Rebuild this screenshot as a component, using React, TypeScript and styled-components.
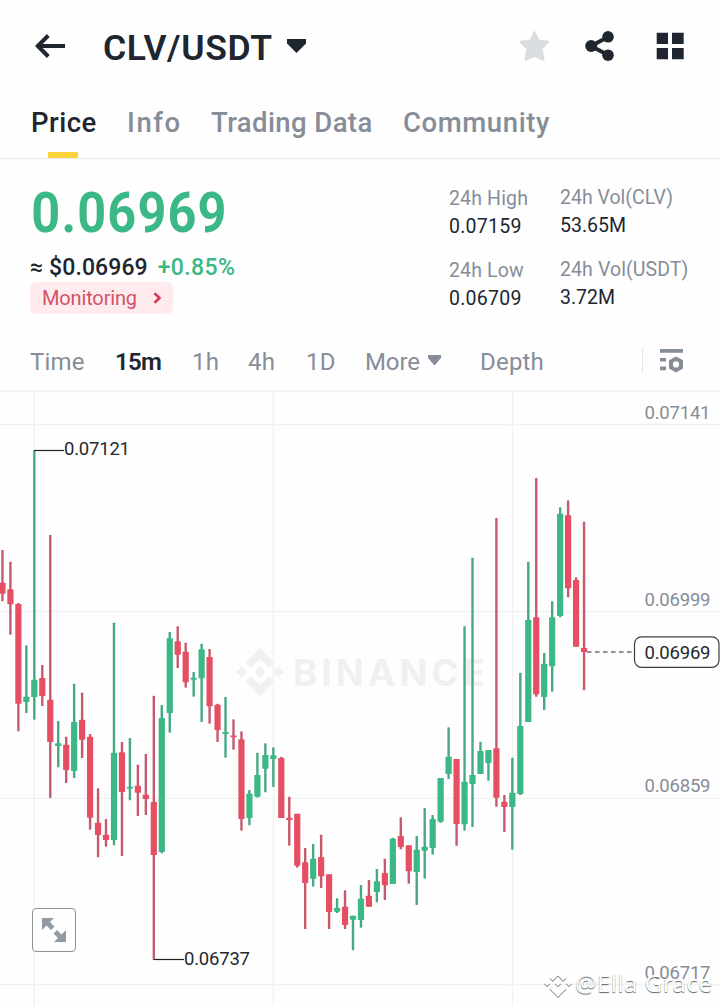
import React from "react";
import styled, { createGlobalStyle } from "styled-components";

const GREEN = "#3bb885";
const RED = "#e64f63";
const INK = "#202630";
const MUTED = "#868d98";

const Global = createGlobalStyle`
  * { box-sizing: border-box; }
  body { margin: 0; background: #fff; font-family: Roboto, "Liberation Sans", sans-serif; overflow: hidden; }
  svg { display: block; }
`;

const Screen = styled.main`
  position: relative;
  width: 720px;
  height: 1006px;
  overflow: hidden;
  background: #fefefe;
  color: ${INK};
  white-space: nowrap;
`;

const Header = styled.header`
  display: flex;
  align-items: center;
  height: 94px;
  padding: 0 35px 2px;
`;

const Pair = styled.h1`
  margin: 4px 0 0 38px;
  width: 184px;
  font-size: 35.5px;
  line-height: 44px;
  font-weight: 600;
  letter-spacing: 0.65px;
`;

const HeaderActions = styled.div`
  display: flex;
  align-items: center;
  gap: 34px;
  margin-left: auto;
`;

const Tabs = styled.nav`
  display: flex;
  height: 65px;
  padding-left: 31px;
  border-bottom: 1px solid #e9ebec;
`;

const Tab = styled.a<{ $w: number; $ls: number; $active?: boolean }>`
  display: flex;
  flex-direction: column;
  justify-content: space-between;
  width: ${(p) => p.$w}px;
  padding-top: 11px;
  font-size: 27.5px;
  line-height: 36px;
  font-weight: 500;
  letter-spacing: ${(p) => p.$ls}px;
  color: ${(p) => (p.$active ? INK : MUTED)};
`;

const TabMark = styled.i`
  width: 30px;
  height: 6px;
  margin-left: 17px;
  background: #f8d33a;
`;

const Summary = styled.section`
  display: flex;
  height: 173px;
  padding: 24px 0 0 30px;
`;

const PriceBlock = styled.div`
  width: 419px;
`;

const BigPrice = styled.div`
  height: 60px;
  padding-left: 1.5px;
  font-size: 56px;
  line-height: 61px;
  font-weight: 700;
  letter-spacing: 1.3px;
  color: ${GREEN};
  transform: scaleX(0.9);
  transform-origin: 0 0;
`;

const Fiat = styled.div`
  display: flex;
  gap: 10px;
  margin-top: 10px;
  font-size: 23px;
  line-height: 30px;
  height: 29px;
  font-weight: 500;
  letter-spacing: 0.1px;
`;

const Change = styled.span`
  color: ${GREEN};
  letter-spacing: 0.35px;
`;

const Tag = styled.div`
  display: flex;
  align-items: center;
  justify-content: space-between;
  width: 143px;
  height: 32px;
  padding: 0 11px 0 12px;
  border-radius: 6px;
  background: #ffebee;
  color: #cf5468;
  font-size: 20px;
  letter-spacing: -0.15px;
`;

const StatColumn = styled.dl<{ $w: number; $top: number }>`
  width: ${(p) => p.$w}px;
  margin: ${(p) => p.$top}px 0 0;
`;

const StatLabel = styled.dt<{ $ls?: number }>`
  font-size: 19.5px;
  line-height: 28px;
  letter-spacing: ${(p) => p.$ls ?? 0}px;
  color: ${MUTED};
`;

const StatValue = styled.dd<{ $ls?: number }>`
  margin: 0 0 16px;
  font-size: 19.5px;
  line-height: 28px;
  letter-spacing: ${(p) => p.$ls ?? 0}px;
`;

const Intervals = styled.nav`
  display: flex;
  align-items: center;
  height: 60px;
  padding: 0 36px 0 30px;
  border-bottom: 2px solid #f2f3f4;
`;

const Interval = styled.span<{ $w: number; $ls?: number; $active?: boolean }>`
  display: flex;
  align-items: center;
  gap: 8px;
  width: ${(p) => p.$w}px;
  padding-top: 2px;
  font-size: 24px;
  line-height: 32px;
  font-weight: ${(p) => (p.$active ? 600 : 400)};
  letter-spacing: ${(p) => p.$ls ?? 0.2}px;
  color: ${(p) => (p.$active ? INK : MUTED)};
  svg { margin-bottom: 4px; }
`;

const Settings = styled.div`
  display: flex;
  align-items: center;
  height: 25px;
  margin: 0 0 1px auto;
  padding-left: 16px;
  border-left: 1px solid #e6e8ea;
`;

const ChartArea = styled.section`
  position: relative;
  height: 614px;
`;

const Expand = styled.button`
  position: absolute;
  left: 32px;
  top: 516px;
  display: grid;
  place-items: center;
  width: 44px;
  height: 44px;
  padding: 0;
  border: 1px solid #8b9499;
  border-radius: 4px;
  background: #fefefe;
`;

const Credit = styled.div`
  position: absolute;
  left: 544px;
  top: 969px;
  display: flex;
  align-items: center;
  gap: 3px;
  color: #fff;
  font-family: "Noto Sans", sans-serif;
  font-size: 24px;
  line-height: 28px;
  letter-spacing: 0.45px;
  text-shadow: 0 1px 1px rgba(50, 50, 50, 0.75);
  svg { filter: drop-shadow(0 1px 0.5px rgba(50, 50, 50, 0.7)); }
`;

type Candle = [number, number, number, number, 0 | 1];

// high, body top, body bottom, low, rising
const candles: Candle[] = [
  [550, 582.7, 593.7, 601.3, 0], [561.7, 589.3, 604.3, 634.7, 0], [603, 604, 703.7, 731.3, 0],
  [645.3, 696.7, 702, 713, 1], [450.3, 679.7, 697, 719.7, 1], [665, 678, 696, 706, 0],
  [535, 699.7, 742, 798, 0], [721, 743.2, 746, 767.3, 1], [736.7, 744.7, 770, 783, 0],
  [683.7, 722, 771, 778, 1], [692.7, 719.7, 739.7, 758, 0], [734, 736.7, 817.7, 829.7, 0],
  [788.3, 822.7, 835, 857.3, 0], [819, 834.7, 840, 846.7, 0], [622.7, 752.7, 840, 845.3, 1],
  [742, 752.3, 792, 856, 0], [738, 786.7, 788.7, 800.3, 1], [764.7, 785.7, 792.7, 816, 0],
  [754, 794.7, 799, 815, 0], [695.7, 802, 855, 960, 0], [705, 718, 852, 853.3, 1],
  [632, 638.3, 713, 732.7, 1], [626.3, 641.3, 654.7, 668, 0], [642.7, 651.7, 682.3, 687.7, 0],
  [672, 677.8, 679.7, 696.7, 1], [643.7, 649.3, 678.3, 722, 1], [649, 657, 706.3, 723.7, 0],
  [703.7, 704.7, 730, 742, 0], [697, 732, 734, 757.7, 1], [719.3, 735.5, 737.2, 749.7, 0],
  [731.3, 739.3, 819, 830.7, 0], [790, 793.7, 818, 825.3, 1], [752.7, 775, 796.7, 797.5, 1],
  [743.3, 755, 768.7, 792.3, 1], [747.3, 755.3, 759, 787, 1], [756.7, 758, 818, 818, 0],
  [796.7, 817.7, 820, 845.7, 0], [813.7, 813.7, 865.7, 867.7, 0], [848, 862.3, 883, 929, 0],
  [844, 858.7, 878.7, 886.7, 1], [834.7, 857, 876.3, 888, 0], [874.3, 874.3, 912, 929, 0],
  [898.3, 908, 911.7, 913, 1], [890.3, 906.7, 925, 929, 0], [915.7, 915.7, 919.7, 950.3, 1],
  [885, 898.7, 920, 927.7, 1], [880, 895.7, 906.7, 906.7, 0], [869, 881.3, 892, 902.3, 1],
  [858.7, 873, 885.3, 900, 0], [837.7, 838.7, 884, 884, 1], [817.3, 836, 847, 849.3, 0],
  [845.3, 845.3, 871.3, 883.7, 0], [836, 849.7, 872, 905, 1], [808, 846.7, 850.7, 878.7, 1],
  [815, 819, 848, 854.7, 1], [778, 778, 821.7, 822.7, 1], [727.3, 756.7, 774, 779, 1],
  [759, 759, 824, 845.7, 0], [626.3, 781.7, 824.3, 830.7, 1], [557.7, 775, 784, 827, 1],
  [741.7, 751, 774, 774, 1], [750, 750, 763, 780.7, 1], [518, 748.3, 797.7, 806.7, 0],
  [795, 801.7, 807, 832, 0], [757.7, 792.7, 807, 849.7, 1], [672.7, 726, 794, 795, 1],
  [561.7, 620, 722, 722, 1], [478, 617.3, 694.3, 696.7, 0], [653, 663.7, 697, 710, 1],
  [601.3, 617.3, 666.3, 691.7, 1], [507.3, 513.7, 616, 617.3, 1], [500.3, 515.3, 588.3, 597.3, 0],
  [577.3, 580, 646.7, 646.7, 0], [521.7, 648, 652, 690.3, 0],
];

const axis = [
  { y: 412, value: "0.07141" },
  { y: 599, value: "0.06999" },
  { y: 785.5, value: "0.06859" },
  { y: 972.5, value: "0.06717" },
];

const BrandMark = ({ size }: { size: number }) => (
  <svg width={size} height={size} viewBox="0 0 48 48" fill="currentColor">
    <path d="M24 0 38.5 14.5 33 20 24 11 15 20 9.5 14.5ZM24 48 9.5 33.5 15 28 24 37 33 28 38.5 33.5ZM24 18.5 29.5 24 24 29.5 18.5 24ZM5.3 18.7 10.6 24 5.3 29.3 0 24ZM42.7 18.7 48 24 42.7 29.3 37.4 24Z" />
  </svg>
);

const Chart = () => (
  <svg width="720" height="614" viewBox="0 392 720 614" fontFamily='Roboto, "Liberation Sans", sans-serif'>
    <g stroke="#f0f1f1" strokeWidth="1.3">
      {[424.5, 611.5, 798.3, 984.5].map((y) => <line key={y} x1="0" x2="720" y1={y} y2={y} />)}
      {[34.3, 273.5, 512.5].map((x) => <line key={x} x1={x} x2={x} y1="392" y2="1006" />)}
    </g>
    <g color="#eff1f1" transform="translate(236 648)"><BrandMark size={48} /></g>
    <text x="293" y="685.5" fontSize="37" fontWeight="700" fontFamily="Inter, sans-serif" fill="#eff1f1" textLength="192">BINANCE</text>
    {candles.map(([high, top, bottom, low, up], i) => {
      const x = 2.45 + i * 7.967;
      return (
        <g key={i}>
          <rect x={x - 1.2} y={high} width="2.4" height={low - high} rx="0.6" fill={up ? "#46a885" : "#c65a6d"} />
          <rect x={x - 3.1} y={top} width="6.2" height={bottom - top} rx="0.6" fill={up ? GREEN : RED} />
        </g>
      );
    })}
    <g stroke="#202428" strokeWidth="1.2">
      <line x1="34" x2="64" y1="450.5" y2="450.5" />
      <line x1="154" x2="184" y1="959.5" y2="959.5" />
      <line x1="587" x2="633" y1="652" y2="652" stroke="#666b70" strokeWidth="1.5" strokeDasharray="4.5 3.5" />
    </g>
    <g fill="#25292e" fontSize="18.5">
      <text x="64" y="455.3" textLength="66">0.07121</text>
      <text x="184" y="965" textLength="66">0.06737</text>
    </g>
    <g fill={MUTED} fontSize="18.5">
      {axis.map((a) => <text key={a.value} x="644.5" y={a.y + 6.5} textLength="66">{a.value}</text>)}
    </g>
    <rect x="634.5" y="636.8" width="84.5" height="30.5" rx="7" fill="#fefefe" stroke="#3a3f44" strokeWidth="1.2" />
    <text x="644.5" y="658.8" fontSize="18.5" fill="#25292e" textLength="66">0.06969</text>
  </svg>
);

export default function App() {
  return (
    <Screen>
      <Global />
      <Header>
        <svg width="30" height="24" viewBox="0 0 30 24" fill="none" stroke={INK} strokeWidth="4">
          <path d="M30 12H3.5M13.3 1.5 2.8 12 13.3 22.5" />
        </svg>
        <Pair>CLV/USDT</Pair>
        <svg width="19" height="14" viewBox="0 0 19 14" fill={INK}>
          <path d="M0 0H19V4.5L9.5 14 0 4.5Z" />
        </svg>
        <HeaderActions>
          <svg width="32" height="30" viewBox="0 0 32 30" fill="#dadde2" stroke="#dadde2" strokeWidth="2.5" strokeLinejoin="round">
            <path d="M15.5 1.5 19 9.8 29 10.8 22.3 17.5 24.3 28.5 15.5 24.5 6.7 28.5 8.7 17.5 2 10.8 12 9.8Z" />
          </svg>
          <svg width="30" height="30" viewBox="0 0 30 30" fill={INK}>
            <path d="M6 15 23 6M6 15 23 24" stroke={INK} strokeWidth="4" />
            <circle cx="6.2" cy="15" r="6" /><circle cx="23" cy="5.8" r="5.8" /><circle cx="23" cy="24.2" r="5.8" />
          </svg>
          <svg width="36" height="28" viewBox="-8 0 36 28" fill={INK}>
            <path d="M-.3 .8H11V12H-.3ZM15 .8H26.7V12H15ZM-.3 16H11V27.3H-.3ZM15 16H26.7V27.3H15Z" />
          </svg>
        </HeaderActions>
      </Header>
      <Tabs>
        <Tab $w={96} $ls={0.45} $active>Price<TabMark /></Tab>
        <Tab $w={84} $ls={1.6}>Info</Tab>
        <Tab $w={192} $ls={0.4}>Trading Data</Tab>
        <Tab $w={150} $ls={0.6}>Community</Tab>
      </Tabs>
      <Summary>
        <PriceBlock>
          <BigPrice>0.06969</BigPrice>
          <Fiat><span>≈ $0.06969</span><Change>+0.85%</Change></Fiat>
          <Tag>
            Monitoring
            <svg width="9" height="12" viewBox="0 0 9 12" fill="none" stroke="#d63c54" strokeWidth="2.6"><path d="M1.5 1.2 6.5 6 1.5 10.8" /></svg>
          </Tag>
        </PriceBlock>
        <StatColumn $w={111} $top={1.5}>
          <StatLabel $ls={0.15}>24h High</StatLabel>
          <StatValue $ls={0.25}>0.07159</StatValue>
          <StatLabel $ls={0.15}>24h Low</StatLabel>
          <StatValue $ls={0.25}>0.06709</StatValue>
        </StatColumn>
        <StatColumn $w={150} $top={0.5}>
          <StatLabel>24h Vol(CLV)</StatLabel>
          <StatValue>53.65M</StatValue>
          <StatLabel $ls={0.1}>24h Vol(USDT)</StatLabel>
          <StatValue>3.72M</StatValue>
        </StatColumn>
      </Summary>
      <Intervals>
        <Interval $w={85}>Time</Interval>
        <Interval $w={77} $ls={-0.7} $active>15m</Interval>
        <Interval $w={56}>1h</Interval>
        <Interval $w={58}>4h</Interval>
        <Interval $w={59}>1D</Interval>
        <Interval $w={115} $ls={-0.1}>
          More
          <svg width="13" height="11" viewBox="0 0 13 11" fill={MUTED}><path d="M0 0H13V3L6.5 10.5 0 3Z" /></svg>
        </Interval>
        <Interval $w={80}>Depth</Interval>
        <Settings>
          <svg width="25" height="25" viewBox="0 0 25 25" fill={MUTED}>
            <path d="M1 1H24V4.700H1ZM1 10H7V13.500H1ZM1 18.500H7V22.300H1Z" />
            <path fillRule="evenodd" d="M17 8.500 24 12.200V20.500L17 24.400 10 20.500V12.200ZM17 13.300A3.100 3.100 0 1 0 17 19.500A3.100 3.100 0 1 0 17 13.300Z" />
          </svg>
        </Settings>
      </Intervals>
      <ChartArea>
        <Chart />
        <Expand aria-label="Expand chart">
          <svg width="26" height="26" viewBox="0 0 26 26" fill="#929ba3">
            <path d="M1 1H13L9 5 13.500 9.500 10 13 5.500 8.500 1 13ZM25 25H13L17 21 12.500 16.500 16 13 20.500 17.500 25 13Z" />
          </svg>
        </Expand>
      </ChartArea>
      <Credit><BrandMark size={28} /><span>@Ella Grace</span></Credit>
    </Screen>
  );
}
